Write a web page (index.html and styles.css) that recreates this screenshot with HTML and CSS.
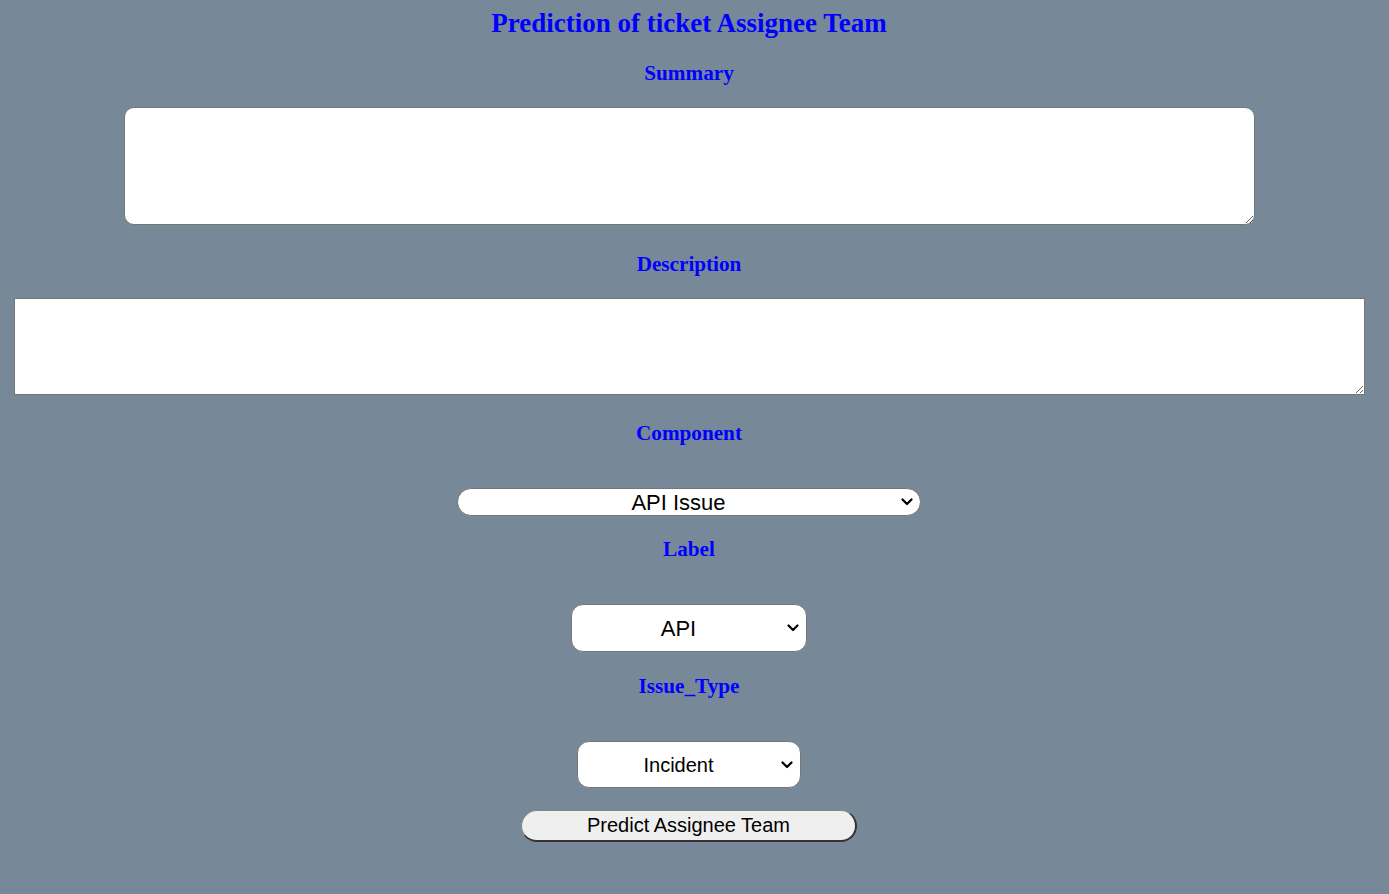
FILE: index.html
```html
<!DOCTYPE html>
<html lang="en">
<head>
<meta charset="utf-8">
<title>Prediction of ticket Assignee Team</title>
<link rel="stylesheet" href="styles.css">
</head>
<body>
<form class="page">
  <div class="title">Prediction of ticket Assignee Team</div>
  <div class="label label-summary">Summary</div>
  <textarea class="summary-box"></textarea>
  <div class="label label-desc">Description</div>
  <textarea class="desc-box"></textarea>
  <div class="label label-comp">Component</div>
  <div class="sel-wrap wrap-comp">
    <select class="sel sel-comp"><option>API Issue</option></select>
    <svg class="chev" width="12" height="8" viewBox="0 0 12 8"><path d="M1.5 1.5 L6 6 L10.5 1.5" fill="none" stroke="#000" stroke-width="2.2" stroke-linecap="round" stroke-linejoin="round"/></svg>
  </div>
  <div class="label label-label">Label</div>
  <div class="sel-wrap wrap-label">
    <select class="sel sel-label"><option>API</option></select>
    <svg class="chev" width="12" height="8" viewBox="0 0 12 8"><path d="M1.5 1.5 L6 6 L10.5 1.5" fill="none" stroke="#000" stroke-width="2.2" stroke-linecap="round" stroke-linejoin="round"/></svg>
  </div>
  <div class="label label-type">Issue_Type</div>
  <div class="sel-wrap wrap-type">
    <select class="sel sel-type"><option>Incident</option></select>
    <svg class="chev" width="12" height="8" viewBox="0 0 12 8"><path d="M1.5 1.5 L6 6 L10.5 1.5" fill="none" stroke="#000" stroke-width="2.2" stroke-linecap="round" stroke-linejoin="round"/></svg>
  </div>
  <button type="button" class="predict">Predict Assignee Team</button>
</form>
</body>
</html>
```

FILE: styles.css
```css
html, body {
  margin: 0;
  padding: 0;
}
body {
  background: #778899;
  margin: 8px;
  font-family: "Liberation Serif", "Times New Roman", serif;
}
.page {
  width: 1362px;
  display: flex;
  flex-direction: column;
  align-items: center;
}
.title {
  color: #0000ff;
  font-weight: bold;
  font-size: 27px;
  line-height: 30px;
}
.label {
  color: #0000ff;
  font-weight: bold;
  font-size: 21.2px;
  line-height: 24px;
}
.label-summary { margin-top: 23px; }
.label-desc { margin-top: 27px; }
.label-comp { margin-top: 26px; }
.label-label { margin-top: 21px; }
.label-type { margin-top: 22px; }

textarea {
  display: block;
  box-sizing: border-box;
  background: #fff;
  border: 1px solid #767676;
  margin: 0;
  padding: 2px;
}
.summary-box {
  width: 1131px;
  height: 118px;
  border-radius: 10px;
  margin-top: 22px;
}
.desc-box {
  align-self: flex-start;
  margin-left: 6px;
  width: 1351px;
  height: 97px;
  border-radius: 0;
  margin-top: 22px;
}
.sel-wrap {
  position: relative;
}
.wrap-comp { margin-top: 43px; }
.wrap-label { margin-top: 43px; }
.wrap-type { margin-top: 43px; }
.chev {
  position: absolute;
  right: 8px;
  top: 50%;
  margin-top: -4px;
  pointer-events: none;
}
.sel {
  display: block;
  box-sizing: border-box;
  appearance: none;
  -webkit-appearance: none;
  background-color: #fff;
  color: #000;
  border: 1px solid #767676;
  font-family: "Liberation Sans", Arial, sans-serif;
  text-align: center;
  text-align-last: center;
  margin: 0;
  padding: 0 22px 0 1px;
}
.sel-comp {
  width: 464px;
  height: 28px;
  border-radius: 14px;
  font-size: 22px;
}
.sel-label {
  width: 236px;
  height: 48px;
  border-radius: 12px;
  font-size: 22px;
}
.sel-type {
  width: 224px;
  height: 47px;
  border-radius: 12px;
  font-size: 20px;
}
.predict {
  box-sizing: border-box;
  width: 336px;
  height: 32px;
  margin-top: 22px;
  background: #efefef;
  color: #000;
  border-radius: 16px;
  border-width: 1px 2px 2px 1px;
  border-style: solid;
  border-color: #858585 #333 #333 #858585;
  font-family: "Liberation Sans", Arial, sans-serif;
  font-size: 20px;
  padding: 0 6px;
}
```
